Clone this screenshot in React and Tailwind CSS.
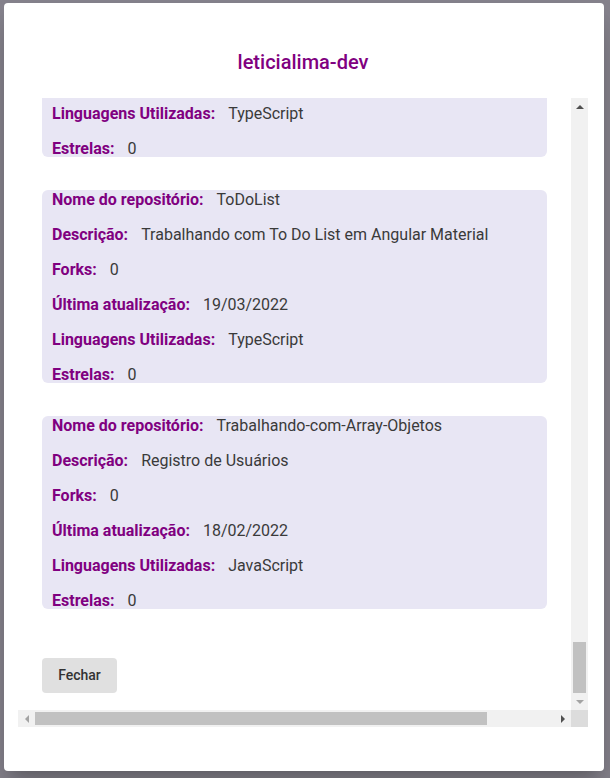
import React from 'react';

const repos = [
  {
    nome: 'ToDoList',
    descricao: 'Trabalhando com To Do List em Angular Material',
    forks: 0,
    atualizacao: '19/03/2022',
    linguagens: 'TypeScript',
    estrelas: 0,
  },
  {
    nome: 'Trabalhando-com-Array-Objetos',
    descricao: 'Registro de Usuários',
    forks: 0,
    atualizacao: '18/02/2022',
    linguagens: 'JavaScript',
    estrelas: 0,
  },
];

const Row = ({ label, value }) => (
  <div className="flex items-center h-[18px] pt-[2px] leading-[16px] whitespace-nowrap">
    <span className="font-bold text-[#800080]">{label}</span>
    <span className="ml-[13px] text-[#3a3a3a]">{value}</span>
  </div>
);

const RepoCard = ({ repo }) => (
  <div className="w-[505px] h-[193px] shrink-0 rounded-[6px] bg-[#e8e6f4] pl-[10px] flex flex-col gap-[17px] overflow-hidden">
    <Row label="Nome do repositório:" value={repo.nome} />
    <Row label="Descrição:" value={repo.descricao} />
    <Row label="Forks:" value={repo.forks} />
    <Row label="Última atualização:" value={repo.atualizacao} />
    <Row label="Linguagens Utilizadas:" value={repo.linguagens} />
    <Row label="Estrelas:" value={repo.estrelas} />
  </div>
);

// scrollbar arrows
const Arrow = ({ dir, color }) => {
  const points = {
    up: '4,2 8,6 0,6',
    down: '0,2 8,2 4,6',
    left: '6,0 6,8 2,4',
    right: '2,0 2,8 6,4',
  }[dir];
  return (
    <svg width="8" height="8" viewBox="0 0 8 8">
      <polygon points={points} fill={color} />
    </svg>
  );
};

export default function App() {
  return (
    <div
      className="w-[610px] h-[778px] bg-[#86838d] pt-[3px] pl-[4px]"
      style={{ fontFamily: 'Roboto, "Liberation Sans", sans-serif' }}
    >
      <div className="w-[600px] h-[768px] bg-white rounded-[4px] pl-[14px] pr-[16px] flex flex-col shadow-[0_11px_15px_-7px_rgba(0,0,0,0.2),0_24px_38px_3px_rgba(0,0,0,0.14)]">
        <div className="h-[95px] shrink-0 pt-[43px] text-center">
          <h2 className="text-[20px] leading-[32px] font-medium text-[#800080]">leticialima-dev</h2>
        </div>

        <div className="flex flex-col h-[629px]">
          <div className="flex h-[612px]">
            <div className="flex-1 overflow-hidden">
              <div className="pl-[24px] flex flex-col text-[16px]">
                <div className="flex flex-col gap-[33px]">
                  {/* tail of the previous card, scrolled past */}
                  <div className="w-[505px] h-[59px] rounded-b-[6px] bg-[#e8e6f4] pl-[10px] flex flex-col justify-end gap-[17px]">
                    <Row label="Linguagens Utilizadas:" value="TypeScript" />
                    <Row label="Estrelas:" value="0" />
                  </div>
                  {repos.map((repo) => (
                    <RepoCard key={repo.nome} repo={repo} />
                  ))}
                </div>
                <button className="mt-[49px] w-[75px] h-[35px] rounded-[4px] bg-[#e0e0e0] text-[14px] font-medium text-[#333]">
                  Fechar
                </button>
              </div>
            </div>

            {/* vertical scrollbar */}
            <div className="w-[17px] bg-[#f1f1f1] flex flex-col">
              <div className="h-[17px] flex items-center justify-center">
                <Arrow dir="up" color="#505050" />
              </div>
              <div className="flex-1 flex flex-col justify-end px-[2px]">
                <div className="h-[51px] bg-[#c1c1c1]" />
              </div>
              <div className="h-[17px] flex items-center justify-center">
                <Arrow dir="down" color="#a3a3a3" />
              </div>
            </div>
          </div>

          {/* horizontal scrollbar */}
          <div className="flex h-[17px]">
            <div className="flex-1 bg-[#f1f1f1] flex items-center">
              <div className="w-[17px] h-full flex items-center justify-center">
                <Arrow dir="left" color="#a3a3a3" />
              </div>
              <div className="w-[452px] h-[13px] bg-[#c1c1c1]" />
              <div className="flex-1" />
              <div className="w-[17px] h-full flex items-center justify-center">
                <Arrow dir="right" color="#505050" />
              </div>
            </div>
            <div className="w-[17px] bg-[#dcdcdc]" />
          </div>
        </div>
      </div>
    </div>
  );
}
